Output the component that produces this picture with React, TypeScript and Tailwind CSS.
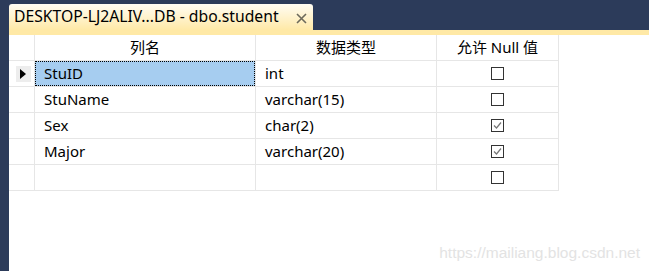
import React from 'react';

const rows = [
  { name: 'StuID', type: 'int', nullable: false, selected: true },
  { name: 'StuName', type: 'varchar(15)', nullable: false },
  { name: 'Sex', type: 'char(2)', nullable: true },
  { name: 'Major', type: 'varchar(20)', nullable: true },
  { name: '', type: '', nullable: false },
];

const CheckBox = ({ checked }: { checked: boolean }) => (
  <div className="w-[13px] h-[13px] border border-[#333] bg-white flex items-center justify-center">
    {checked && (
      <svg width="11" height="11" viewBox="0 0 11 11">
        <path d="M2 5.5 L4.5 8 L9 2.5" fill="none" stroke="#777" strokeWidth="1.2" />
      </svg>
    )}
  </div>
);

const cell = 'h-[26px] border-b border-r border-[#e6e6e6] flex items-center';

export default function App() {
  return (
    <div
      className="w-[649px] h-[271px] bg-[#2c3b5a] flex overflow-hidden text-[15px] text-black"
      style={{ fontFamily: '"Noto Sans", "Noto Sans CJK SC", sans-serif' }}
    >
      {/* left dock strip */}
      <div className="w-[9px] shrink-0" />

      <div className="flex-1 flex flex-col">
        {/* tab well */}
        <div className="h-[30px] flex items-end">
          <div className="w-[304px] h-[26px] rounded-t-[3px] bg-gradient-to-b from-[#fffcf3] to-[#ffe9a6] flex items-center pl-[5px] pr-[6px]">
            <span className="flex-1 whitespace-nowrap leading-none text-[15.7px]">DESKTOP-LJ2ALIV...DB - dbo.student</span>
            <svg width="11" height="11" viewBox="0 0 11 11" className="mb-[-2px]">
              <path d="M1 1 L10 10 M10 1 L1 10" stroke="#6d6a5c" strokeWidth="1.6" />
            </svg>
          </div>
        </div>
        <div className="h-[5px] bg-[#ffe9a6]" />

        {/* designer grid */}
        <div className="flex-1 bg-white relative">
          <div className="grid grid-cols-[25px_222px_181px_122px] w-[550px]">
            <div className="h-[26px] border-b border-[#e6e6e6]" />
            <div className={`${cell} border-l justify-center`}>列名</div>
            <div className={`${cell} justify-center`}>数据类型</div>
            <div className={`${cell} justify-center`}>允许 Null 值</div>

            {rows.map((r, i) => (
              <React.Fragment key={i}>
                <div className="h-[26px] border-b border-[#e6e6e6] flex items-center justify-center pl-[3px]">
                  {r.selected && (
                    <div className="w-[15px] h-[16px] bg-[#ededed] flex items-center justify-center">
                      <svg width="8" height="10" viewBox="0 0 8 10">
                        <path d="M1 0 L7 5 L1 10 Z" fill="#000" />
                      </svg>
                    </div>
                  )}
                </div>
                <div className={`${cell} border-l`}>
                  {r.selected ? (
                    <div className="w-full h-full bg-[#a6cdf0] border border-dotted border-black flex items-center pl-[8px]">
                      {r.name}
                    </div>
                  ) : (
                    <span className="pl-[9px]">{r.name}</span>
                  )}
                </div>
                <div className={`${cell} pl-[9px]`}>{r.type}</div>
                <div className={`${cell} justify-center`}>
                  <CheckBox checked={r.nullable} />
                </div>
              </React.Fragment>
            ))}
          </div>

          <div
            className="absolute right-[9px] bottom-[7px] text-[15.5px] text-[#e3e3e3]"
            style={{ fontFamily: '"Liberation Sans", Arial, sans-serif' }}
          >
            https://mailiang.blog.csdn.net
          </div>
        </div>
      </div>
    </div>
  );
}
